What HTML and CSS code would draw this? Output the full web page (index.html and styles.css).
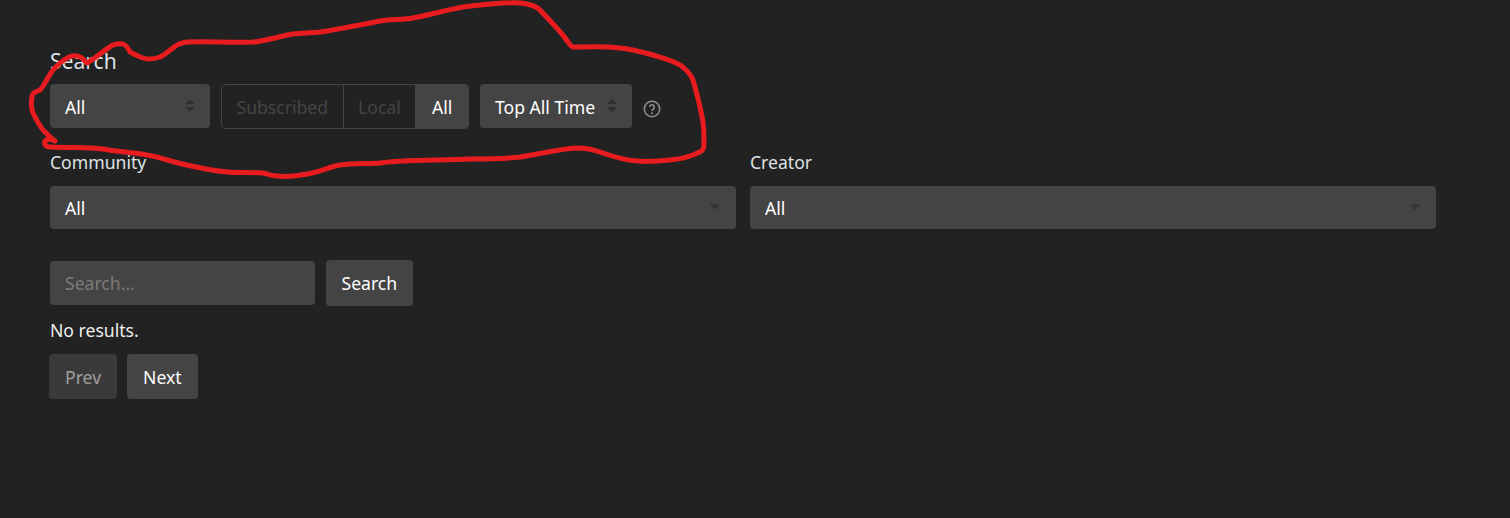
FILE: index.html
```html
<!DOCTYPE html>
<html lang="en">
<head>
    <meta charset="UTF-8">
    <title>Search</title>
    <link rel="stylesheet" href="styles.css">
</head>
<body>
    <main class="container">
        <h1 class="title">Search</h1>

        <div class="filters">
            <div class="select select-type">All<span class="updown"></span></div>
            <div class="btn-group">
                <span class="toggle">Subscribed</span>
                <span class="toggle">Local</span>
                <span class="toggle active">All</span>
            </div>
            <div class="select select-sort">Top All Time<span class="updown"></span></div>
            <svg class="help" viewBox="0 0 18 18" width="18" height="18">
                <circle cx="9" cy="9" r="7.7" fill="none" stroke="currentColor" stroke-width="1.6"/>
                <path d="M6.7 7.1a2.3 2.3 0 1 1 3.6 1.9c-.8.5-1.3 1-1.3 1.9" fill="none" stroke="currentColor" stroke-width="1.6"/>
                <circle cx="9" cy="13.2" r="1" fill="currentColor"/>
            </svg>
        </div>

        <div class="pickers">
            <div class="picker">
                <label class="label">Community</label>
                <div class="select select-wide">All<span class="caret"></span></div>
            </div>
            <div class="picker">
                <label class="label">Creator</label>
                <div class="select select-wide">All<span class="caret"></span></div>
            </div>
        </div>

        <form class="search-form">
            <input class="search-input" type="text" placeholder="Search...">
            <button class="btn" type="button">Search</button>
        </form>

        <p class="no-results">No results.</p>

        <div class="paginator">
            <button class="btn btn-disabled" type="button">Prev</button>
            <button class="btn" type="button">Next</button>
        </div>
    </main>

    <!-- red marker scribble drawn on top of the screenshot -->
    <svg class="scribble" viewBox="0 0 1510 518" width="1510" height="518">
        <path d="M55 141C50 138 47 139 45 141C44 145 46 147 50 147C70 148 90 147 103 149C118 152 132 152 147 155C160 157 175 163 187 165C200 168 214 171 227 172C240 173 252 172 263 173C268 174 272 176 277 176C288 177 298 176 307 174C319 172 329 167 340 165C354 163 366 164 380 163C388 162 396 161 403 161C425 160 448 160 470 159C487 159 504 159 520 157C540 154 558 149 577 148C587 148 595 150 603 153C614 157 625 160 637 161C648 162 660 161 670 160C680 159 690 157 700 152C704 150 704 147 704 143C704 136 704 130 703 123C701 108 697 94 693 80C690 73 686 69 680 65C672 60 663 58 653 55C642 52 631 49 620 48C604 46 588 47 573 47C570 46 570 44 568 42C560 30 549 20 540 10C536 6 532 5 527 4C519 2 511 3 503 3C489 4 476 5 463 7C446 10 430 15 413 18C402 20 391 19 380 21C360 25 340 29 320 32C311 33 302 33 293 34C280 36 267 41 253 42C231 43 209 41 187 42C182 43 180 43 177 45C171 49 166 54 160 57C154 59 149 60 143 58C137 56 134 54 130 52C128 48 126 45 123 44C119 43 116 44 113 45C104 50 96 58 87 63C84 60 81 56 77 56C73 55 70 56 67 58C61 62 57 65 53 70C48 76 45 85 40 90C35 92 32 93 32 97C31 103 31 108 33 113C36 119 39 125 43 130C47 134 51 138 55 141" fill="none" stroke="#e81c1f" stroke-width="5" stroke-linecap="round" stroke-linejoin="round"/>
    </svg>
</body>
</html>
```

FILE: styles.css
```css
* {
    box-sizing: border-box;
}

body {
    margin: 0;
    min-height: 518px;
    background-color: #222;
    color: #dee2e6;
    font-family: "Noto Sans", "Open Sans", sans-serif;
    font-size: 17.6px;
    overflow: hidden;
}

.container {
    width: 1386px;
    margin-left: 50px;
    padding-top: 47px;
}

.title {
    margin: 0 0 9px;
    height: 28px;
    font-size: 21.1px;
    line-height: 28px;
    font-weight: 400;
}

.filters {
    display: flex;
    align-items: center;
    gap: 11px;
    height: 44px;
    margin-bottom: 22px;
}

.select {
    display: flex;
    align-items: center;
    justify-content: space-between;
    height: 44px;
    padding: 0 15px;
    border-radius: 4px;
    background-color: #444;
    color: #fff;
}

.filters .select {
    padding-top: 1px;
}

.select-type {
    width: 160px;
}

.select-sort {
    width: 152px;
}

.select-wide {
    height: 43px;
}

.updown {
    width: 10px;
    height: 13px;
    background:
        linear-gradient(to bottom right, transparent 50%, #303030 50%) 0 0 / 5px 5px no-repeat,
        linear-gradient(to bottom left, transparent 50%, #303030 50%) 5px 0 / 5px 5px no-repeat,
        linear-gradient(to top right, transparent 50%, #303030 50%) 0 8px / 5px 5px no-repeat,
        linear-gradient(to top left, transparent 50%, #303030 50%) 5px 8px / 5px 5px no-repeat;
    margin-top: -2px;
}

.caret {
    width: 0;
    height: 0;
    border-left: 6px solid transparent;
    border-right: 6px solid transparent;
    border-top: 6px solid #363636;
    margin-top: -2px;
}

.btn-group {
    display: flex;
    height: 45px;
    width: 248px;
    border: 1px solid #444;
    border-radius: 4px;
    overflow: hidden;
}

.toggle {
    display: flex;
    align-items: center;
    justify-content: center;
    padding: 1px 14.5px 0;
    color: #444;
    border-right: 1px solid #444;
}

.toggle:last-child {
    border-right: 0;
}

.toggle.active {
    flex-grow: 1;
    background-color: #444;
    color: #fff;
}

.help {
    margin-top: 6px;
    color: #8e8e8e;
}

.pickers {
    display: grid;
    grid-template-columns: 686px 686px;
    gap: 14px;
    margin-bottom: 31px;
}

.label {
    display: block;
    height: 24px;
    margin-bottom: 12px;
    line-height: 24px;
}

.search-form {
    display: flex;
    align-items: center;
    gap: 11px;
    height: 46px;
}

.search-input {
    width: 265px;
    height: 44px;
    padding: 0 15px;
    border: 0;
    border-radius: 4px;
    background-color: #444;
    color: #fff;
    font: inherit;
    outline: none;
}

.search-input::placeholder {
    color: #7b7b7b;
}

.btn {
    height: 46px;
    padding: 0 15.5px;
    border: 0;
    border-radius: 4px;
    background-color: #444;
    color: #fff;
    font: inherit;
}

.no-results {
    margin: 12px 0 11px;
    height: 25px;
    line-height: 25px;
    color: #eee;
}

.paginator {
    display: flex;
    gap: 10px;
    margin-left: -1px;
}

.paginator .btn {
    height: 45px;
    padding: 0 16px;
}

.btn-disabled {
    background-color: #3a3a3a;
    color: #a0a0a0;
}

.scribble {
    position: absolute;
    top: 0;
    left: 0;
    pointer-events: none;
}
```
